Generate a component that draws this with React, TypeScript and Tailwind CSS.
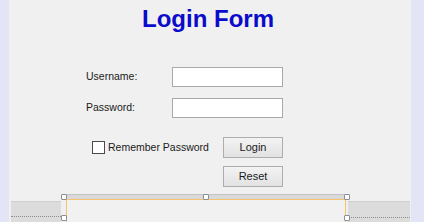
import React from "react";

const font = { fontFamily: '"Liberation Sans", Arial, sans-serif' };

function Handle({ className }: { className: string }) {
  return <div className={`absolute w-[6px] h-[6px] bg-white border border-[#8a8f96] rounded-[1px] ${className}`} />;
}

function WinButton({ label }: { label: string }) {
  return (
    <button className="w-[60px] h-[21px] border border-[#adadad] bg-gradient-to-b from-[#f3f3f3] to-[#e2e2e2] text-[11px] text-[#1a1a1a] leading-none">
      {label}
    </button>
  );
}

export default function App() {
  return (
    <div className="flex w-[424px] h-[222px] overflow-hidden bg-[#f0f0f0]" style={font}>
      <div className="w-[9px] bg-[#e4e4f7]" />

      <div className="flex-1 flex flex-col">
        <div className="mt-[5px] h-[28px] leading-[28px] text-center pr-[4px] text-[24px] font-bold text-[#0b0bcc]">
          Login Form
        </div>

        <div className="ml-[77px] mt-[34px] w-[197px] text-[10.5px] text-[#1a1a1a]">
          <div className="grid grid-cols-[86px_111px] gap-y-[11px]">
            <div className="h-[20px] flex items-center">Username:</div>
            <div className="h-[20px] border border-[#a9a9a9] bg-white" />
            <div className="h-[20px] flex items-center">Password:</div>
            <div className="h-[20px] border border-[#a9a9a9] bg-white" />
          </div>

          <div className="flex items-center mt-[19px] h-[21px]">
            <div className="ml-[6px] w-[13px] h-[13px] border border-[#4a4a4a] bg-white" />
            <span className="ml-[3px]">Remember Password</span>
            <div className="ml-auto">
              <WinButton label="Login" />
            </div>
          </div>

          <div className="flex justify-end mt-[8px]">
            <WinButton label="Reset" />
          </div>
        </div>

        <div className="relative mt-auto h-[28px] flex">
          <div className="ml-[2px] w-[50px] mt-[7px] bg-[#dcdcdc] border-t border-[#cfcfcf]">
            <div className="h-[15px] border-b border-dotted border-[#8c8c8c]" />
          </div>
          <div className="ml-[5px] w-[280px] flex flex-col">
            <div className="h-[5px] bg-[#d9d9d9] border-t border-[#c4c4c4]" />
            <div className="flex-1 border-t border-l border-r border-[#f4c36c] bg-[#f1f1f1]" />
          </div>
          <div className="ml-[2px] w-[62px] mt-[7px] bg-[#dcdcdc] border-t border-[#cfcfcf]">
            <div className="h-[16px] border-b border-dotted border-[#8c8c8c]" />
          </div>

          <Handle className="left-[52px] top-0" />
          <Handle className="left-[194px] top-0" />
          <Handle className="left-[335px] top-0" />
          <Handle className="left-[52px] top-[21px]" />
          <Handle className="left-[335px] top-[21px]" />
        </div>
      </div>

      <div className="w-[13px] bg-[#e4e4f7]" />
    </div>
  );
}
